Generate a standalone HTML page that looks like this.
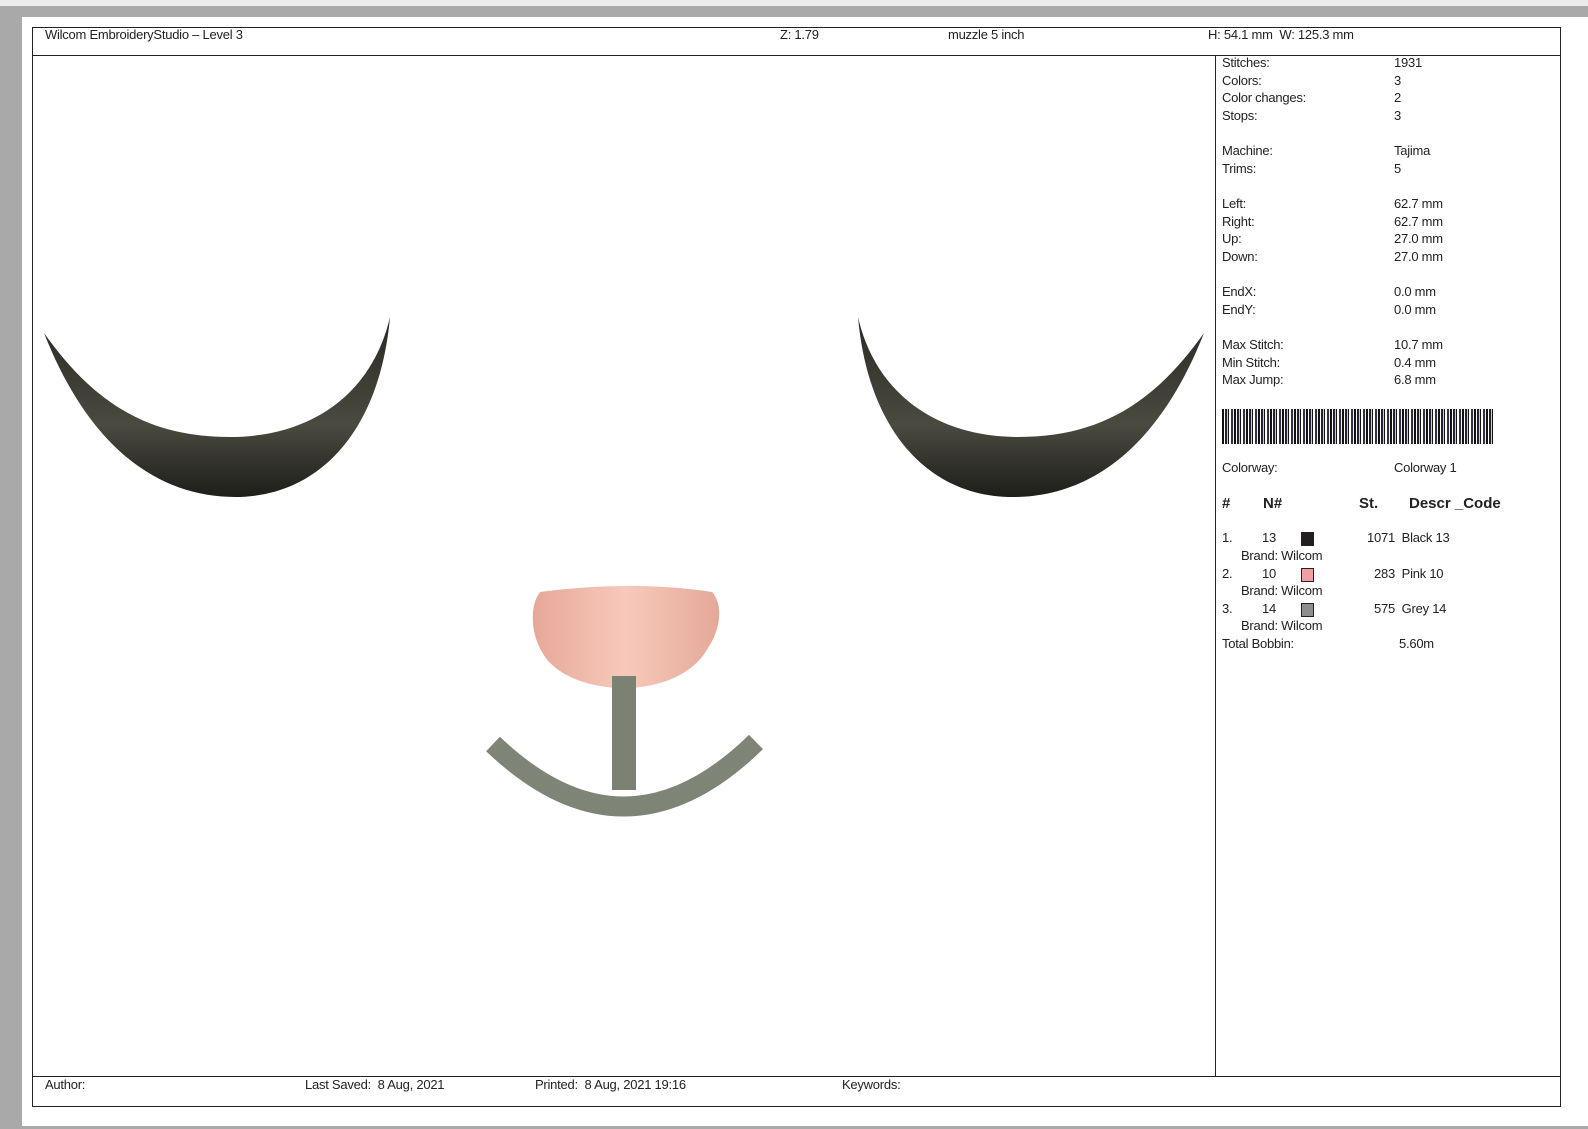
<!DOCTYPE html>
<html><head><meta charset="utf-8"><style>
html,body{margin:0;padding:0;width:1588px;height:1129px;overflow:hidden;background:#a9a9a9;font-family:"Liberation Sans",Arial,sans-serif;}
.top{position:absolute;left:0;top:0;width:1588px;height:6px;background:#ececec;}
.page{position:absolute;left:22px;top:17px;width:1566px;height:1109px;background:#fff;}
.box{position:absolute;left:32px;top:27px;width:1527px;height:1078px;border:1.5px solid #222;}
.hl{position:absolute;left:32px;width:1528px;height:0;border-top:1.5px solid #222;}
.vl{position:absolute;left:1215px;top:55px;width:0;height:1021px;border-left:1.5px solid #222;}
.t{position:absolute;font-size:13px;color:#222;letter-spacing:-0.25px;white-space:nowrap;line-height:14px;}
.sw{position:absolute;width:11px;height:12px;border:1px solid #222;}
</style></head><body>
<div class="top"></div>
<div class="page"></div>
<div class="box"></div>
<div class="hl" style="top:55px"></div>
<div class="hl" style="top:1076px"></div>
<div class="vl"></div>

<div class="t" style="left:45px;top:28px">Wilcom EmbroideryStudio – Level 3</div>
<div class="t" style="left:780px;top:28px">Z: 1.79</div>
<div class="t" style="left:948px;top:28px">muzzle 5 inch</div>
<div class="t" style="left:1208px;top:28px">H: 54.1 mm &nbsp;W: 125.3 mm</div>

<div class="t" style="left:45px;top:1078px">Author:</div>
<div class="t" style="left:305px;top:1078px">Last Saved: &nbsp;8 Aug, 2021</div>
<div class="t" style="left:535px;top:1078px">Printed: &nbsp;8 Aug, 2021 19:16</div>
<div class="t" style="left:842px;top:1078px">Keywords:</div>

<div class="t" style="left:1222px;top:56px">Stitches:</div><div class="t" style="left:1394px;top:56px">1931</div>
<div class="t" style="left:1222px;top:74px">Colors:</div><div class="t" style="left:1394px;top:74px">3</div>
<div class="t" style="left:1222px;top:91px">Color changes:</div><div class="t" style="left:1394px;top:91px">2</div>
<div class="t" style="left:1222px;top:109px">Stops:</div><div class="t" style="left:1394px;top:109px">3</div>
<div class="t" style="left:1222px;top:144px">Machine:</div><div class="t" style="left:1394px;top:144px">Tajima</div>
<div class="t" style="left:1222px;top:162px">Trims:</div><div class="t" style="left:1394px;top:162px">5</div>
<div class="t" style="left:1222px;top:197px">Left:</div><div class="t" style="left:1394px;top:197px">62.7 mm</div>
<div class="t" style="left:1222px;top:215px">Right:</div><div class="t" style="left:1394px;top:215px">62.7 mm</div>
<div class="t" style="left:1222px;top:232px">Up:</div><div class="t" style="left:1394px;top:232px">27.0 mm</div>
<div class="t" style="left:1222px;top:250px">Down:</div><div class="t" style="left:1394px;top:250px">27.0 mm</div>
<div class="t" style="left:1222px;top:285px">EndX:</div><div class="t" style="left:1394px;top:285px">0.0 mm</div>
<div class="t" style="left:1222px;top:303px">EndY:</div><div class="t" style="left:1394px;top:303px">0.0 mm</div>
<div class="t" style="left:1222px;top:338px">Max Stitch:</div><div class="t" style="left:1394px;top:338px">10.7 mm</div>
<div class="t" style="left:1222px;top:356px">Min Stitch:</div><div class="t" style="left:1394px;top:356px">0.4 mm</div>
<div class="t" style="left:1222px;top:373px">Max Jump:</div><div class="t" style="left:1394px;top:373px">6.8 mm</div>

<div style="position:absolute;left:1222px;top:409px;width:272px;height:35px;background:repeating-linear-gradient(90deg,#111 0 2px,#fff 2px 3px,#223 3px 5px,#ccd 5px 6px,#111 6px 7px,#fff 7px 9px,#334 9px 11px,#eee 11px 12px)"></div>

<div class="t" style="left:1222px;top:461px">Colorway:</div><div class="t" style="left:1394px;top:461px">Colorway 1</div>
<div class="t" style="left:1222px;top:497px;font-size:15px;font-weight:bold;letter-spacing:0">#</div>
<div class="t" style="left:1263px;top:497px;font-size:15px;font-weight:bold;letter-spacing:0">N#</div>
<div class="t" style="left:1359px;top:497px;font-size:15px;font-weight:bold;letter-spacing:0">St.</div>
<div class="t" style="left:1409px;top:497px;font-size:15px;font-weight:bold;letter-spacing:0">Descr _Code</div>

<div class="t" style="left:1222px;top:531px">1.</div><div class="t" style="left:1262px;top:531px">13</div><div class="sw" style="left:1301px;top:532px;background:#231f1f"></div><div class="t" style="left:1367px;top:531px">1071 &nbsp;Black 13</div>
<div class="t" style="left:1241px;top:549px">Brand: Wilcom</div>
<div class="t" style="left:1222px;top:567px">2.</div><div class="t" style="left:1262px;top:567px">10</div><div class="sw" style="left:1301px;top:568px;background:#f0a0a4"></div><div class="t" style="left:1374px;top:567px">283 &nbsp;Pink 10</div>
<div class="t" style="left:1241px;top:584px">Brand: Wilcom</div>
<div class="t" style="left:1222px;top:602px">3.</div><div class="t" style="left:1262px;top:602px">14</div><div class="sw" style="left:1301px;top:603px;background:#8e8e8e"></div><div class="t" style="left:1374px;top:602px">575 &nbsp;Grey 14</div>
<div class="t" style="left:1241px;top:619px">Brand: Wilcom</div>
<div class="t" style="left:1222px;top:637px">Total Bobbin:</div><div class="t" style="left:1399px;top:637px">5.60m</div>

<svg width="1588" height="1129" style="position:absolute;left:0;top:0">
<defs>
<linearGradient id="e" x1="0" y1="0" x2="0" y2="1"><stop offset="0" stop-color="#2a2a24"/><stop offset="0.6" stop-color="#4a4a40"/><stop offset="1" stop-color="#1e1e1a"/></linearGradient>
<linearGradient id="n" x1="0" y1="0" x2="1" y2="0"><stop offset="0" stop-color="#e6a898"/><stop offset="0.5" stop-color="#f7c9bb"/><stop offset="1" stop-color="#e4a898"/></linearGradient>
</defs>
<path d="M44,333 C90,450 160,497 235,497 C320,497 380,430 390,317 C372,395 310,437 230,437 C150,437 95,405 44,333 Z" fill="url(#e)"/>
<path d="M1204,333 C1158,450 1088,497 1013,497 C928,497 868,430 858,317 C876,395 938,437 1018,437 C1098,437 1153,405 1204,333 Z" fill="url(#e)"/>
<path d="M493,744 Q625,870 756,742" fill="none" stroke="#7e8576" stroke-width="20"/>
<path d="M540,592 C600,584 660,584 712,592 C724,605 720,630 708,648 C690,680 650,688 624,688 C590,688 555,676 542,652 C530,632 530,605 540,592 Z" fill="url(#n)"/>
<rect x="612" y="676" width="24" height="114" fill="#7b8274"/>
</svg>
</body></html>
